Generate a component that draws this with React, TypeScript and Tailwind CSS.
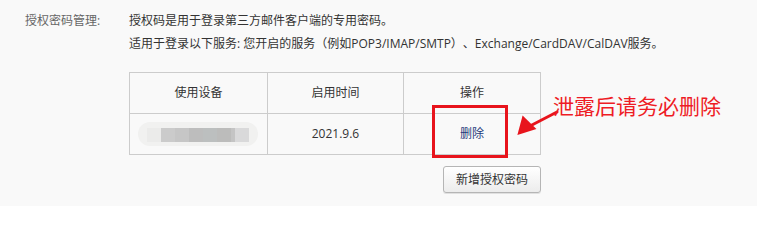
import React from 'react';

const font = { fontFamily: '"Open Sans", "Noto Sans CJK SC", sans-serif' };

function BlurredDevice() {
  // pixelated/blurred device name, masked in the screenshot
  return (
    <div className="ml-[8px] flex h-[24px] w-[120px] items-center rounded-full bg-[#f1f1f0]">
      <div className="ml-[9px] flex h-[14px] w-[102px] translate-y-[1px]">
        <div className="w-[14px] bg-[#ebebea]" />
        <div className="w-[14px] bg-[#cbcbcb]" />
        <div className="w-[14px] bg-[#c6c6c6]" />
        <div className="w-[14px] bg-[#bdbdbd]" />
        <div className="w-[14px] bg-[#bcbfbf]" />
        <div className="w-[14px] bg-[#bcbcbb]" />
        <div className="w-[4px] bg-[#c4c4c4]" />
        <div className="w-[14px] bg-[#d9d9da]" />
      </div>
    </div>
  );
}

export default function App() {
  return (
    <div
      className="relative h-[206px] w-[757px] overflow-hidden bg-[#f9f9f9] text-[12px] [text-spacing-trim:space-all]"
      style={font}
    >
      <div className="flex pt-[9px]">
        <div className="w-[129px] shrink-0 pl-[25px] leading-[23px] text-[#666]">授权密码管理:</div>
        <div className="flex flex-col">
          <p className="leading-[23px] text-[#333]">授权码是用于登录第三方邮件客户端的专用密码。</p>
          <p className="leading-[23px] text-[#333]">
            适用于登录以下服务: 您开启的服务（例如POP3/IMAP/SMTP）、Exchange/CardDAV/CalDAV服务。
          </p>

          <table className="mt-[17px] w-[412px] table-fixed border-collapse text-center text-[#333]">
            <thead>
              <tr className="h-[41px]">
                <th className="w-[138px] border border-[#cccccc] font-normal">使用设备</th>
                <th className="w-[136px] border border-[#cccccc] font-normal">启用时间</th>
                <th className="border border-[#cccccc] font-normal">操作</th>
              </tr>
            </thead>
            <tbody>
              <tr className="h-[41px]">
                <td className="border border-[#cccccc]">
                  <BlurredDevice />
                </td>
                <td className="border border-[#cccccc]">2021.9.6</td>
                <td className="border border-[#cccccc] text-[#1e3a7b]">
                  <a className="cursor-pointer">删除</a>
                </td>
              </tr>
            </tbody>
          </table>

          <div className="mt-[11px] flex w-[412px] justify-end">
            <button className="h-[27px] w-[98px] rounded-[3px] border border-[#b5b5b5] bg-gradient-to-b from-white to-[#ececec] text-[12px] text-[#333] shadow-[0_1px_0_#e0e0e0]">
              新增授权密码
            </button>
          </div>
        </div>
      </div>

      {/* red annotation drawn over the page */}
      <div className="absolute left-[432px] top-[105px] h-[53px] w-[76px] border-[3px] border-[#e8141c]" />
      <svg className="absolute left-[510px] top-[100px]" width="60" height="40" viewBox="0 0 60 40">
        <line x1="47" y1="12" x2="20" y2="26" stroke="#e8141c" strokeWidth="3" strokeLinecap="round" />
        <polygon points="5,32 16,15 25,32" fill="#e8141c" transform="rotate(-18 16 26)" />
      </svg>
      <div className="absolute left-[553px] top-[91px] text-[21px] leading-[28px] text-[#ee1c25]" style={{ fontFamily: '"Noto Sans CJK SC", sans-serif' }}>
        泄露后请务必删除
      </div>
    </div>
  );
}
